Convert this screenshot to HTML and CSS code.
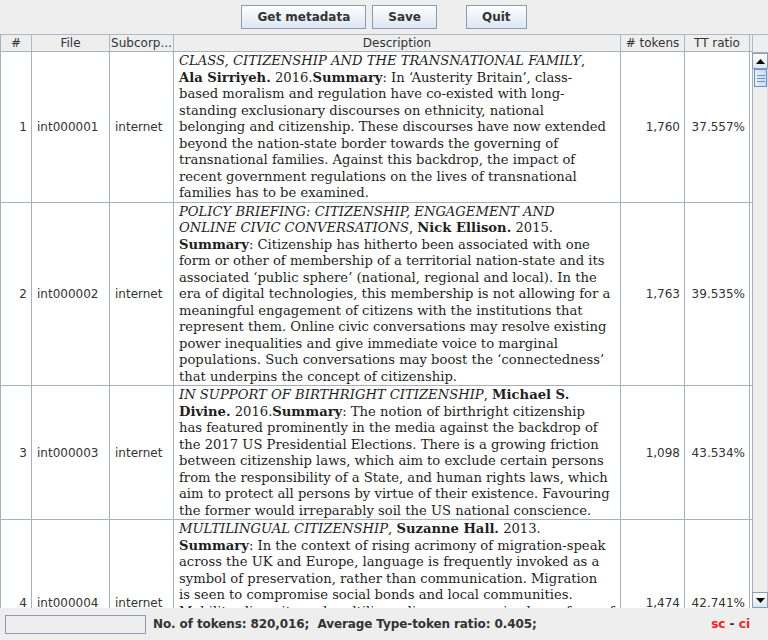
FILE: index.html
```html
<!DOCTYPE html>
<html>
<head>
<meta charset="utf-8">
<link rel="stylesheet" href="styles.css">
</head>
<body>
<div class="app">
  <div class="toolbar">
    <button class="btn">Get metadata</button>
    <button class="btn">Save</button>
    <button class="btn btn-quit">Quit</button>
  </div>
  <div class="main">
    <div class="table">
      <div class="row head">
        <div class="hc">#</div>
        <div class="hc">File</div>
        <div class="hc">Subcorp...</div>
        <div class="hc">Description</div>
        <div class="hc"># tokens</div>
        <div class="hc">TT ratio</div>
      </div>
      <div class="body">
        <div class="row">
          <div class="c r">1</div>
          <div class="c">int000001</div>
          <div class="c">internet</div>
          <div class="c desc">
            <span class="l"><i>CLASS, CITIZENSHIP AND THE TRANSNATIONAL FAMILY</i>,</span>
            <span class="l"><b>Ala Sirriyeh.</b> 2016.<b>Summary</b>: In ‘Austerity Britain’, class-</span>
            <span class="l">based moralism and regulation have co-existed with long-</span>
            <span class="l">standing exclusionary discourses on ethnicity, national</span>
            <span class="l">belonging and citizenship. These discourses have now extended</span>
            <span class="l">beyond the nation-state border towards the governing of</span>
            <span class="l">transnational families. Against this backdrop, the impact of</span>
            <span class="l">recent government regulations on the lives of transnational</span>
            <span class="l">families has to be examined.</span>
          </div>
          <div class="c r">1,760</div>
          <div class="c r">37.557%</div>
        </div>
        <div class="row">
          <div class="c r">2</div>
          <div class="c">int000002</div>
          <div class="c">internet</div>
          <div class="c desc">
            <span class="l"><i>POLICY BRIEFING: CITIZENSHIP, ENGAGEMENT AND</i></span>
            <span class="l"><i>ONLINE CIVIC CONVERSATIONS</i>, <b>Nick Ellison.</b> 2015.</span>
            <span class="l"><b>Summary</b>: Citizenship has hitherto been associated with one</span>
            <span class="l">form or other of membership of a territorial nation-state and its</span>
            <span class="l">associated ‘public sphere’ (national, regional and local). In the</span>
            <span class="l">era of digital technologies, this membership is not allowing for a</span>
            <span class="l">meaningful engagement of citizens with the institutions that</span>
            <span class="l">represent them. Online civic conversations may resolve existing</span>
            <span class="l">power inequalities and give immediate voice to marginal</span>
            <span class="l">populations. Such conversations may boost the ‘connectedness’</span>
            <span class="l">that underpins the concept of citizenship.</span>
          </div>
          <div class="c r">1,763</div>
          <div class="c r">39.535%</div>
        </div>
        <div class="row">
          <div class="c r">3</div>
          <div class="c">int000003</div>
          <div class="c">internet</div>
          <div class="c desc">
            <span class="l"><i>IN SUPPORT OF BIRTHRIGHT CITIZENSHIP</i>, <b>Michael S.</b></span>
            <span class="l"><b>Divine.</b> 2016.<b>Summary</b>: The notion of birthright citizenship</span>
            <span class="l">has featured prominently in the media against the backdrop of</span>
            <span class="l">the 2017 US Presidential Elections. There is a growing friction</span>
            <span class="l">between citizenship laws, which aim to exclude certain persons</span>
            <span class="l">from the responsibility of a State, and human rights laws, which</span>
            <span class="l">aim to protect all persons by virtue of their existence. Favouring</span>
            <span class="l">the former would irreparably soil the US national conscience.</span>
          </div>
          <div class="c r">1,098</div>
          <div class="c r">43.534%</div>
        </div>
        <div class="row">
          <div class="c r">4</div>
          <div class="c">int000004</div>
          <div class="c">internet</div>
          <div class="c desc">
            <span class="l"><i>MULTILINGUAL CITIZENSHIP</i>, <b>Suzanne Hall.</b> 2013.</span>
            <span class="l"><b>Summary</b>: In the context of rising acrimony of migration-speak</span>
            <span class="l">across the UK and Europe, language is frequently invoked as a</span>
            <span class="l">symbol of preservation, rather than communication. Migration</span>
            <span class="l">is seen to compromise social bonds and local communities.</span>
            <span class="l">Mobility, diversity and multilingualism are perceived as a form of</span>
            <span class="l">threat to social cohesion. This article explores how multilingual</span>
            <span class="l">citizens in urban neighbourhoods negotiate belonging through</span>
            <span class="l">everyday language practices in shops, streets and public</span>
            <span class="l">spaces of the city.</span>
          </div>
          <div class="c r">1,474</div>
          <div class="c r">42.741%</div>
        </div>
      </div>
    </div>
    <div class="vscroll">
      <div class="corner"></div>
      <div class="sb-btn">
        <svg width="9" height="5" viewBox="0 0 9 5"><path d="M0 5 L4.5 0 L9 5 Z" fill="#000"/></svg>
      </div>
      <div class="sb-track">
        <div class="thumb">
          <svg width="8" height="7" viewBox="0 0 8 7"><path d="M0 0.5H8M0 3.5H8M0 6.5H8" stroke="#6f8fc7" stroke-width="1"/></svg>
        </div>
      </div>
      <div class="sb-btn">
        <svg width="9" height="5" viewBox="0 0 9 5"><path d="M0 0 L4.5 5 L9 0 Z" fill="#000"/></svg>
      </div>
    </div>
  </div>
  <div class="status">
    <div class="field"></div>
    <div class="stat-text">No. of tokens: 820,016;  Average Type-token ratio: 0.405;</div>
    <div class="badge"><span class="red">sc</span> - <span class="red">ci</span></div>
  </div>
</div>
</body>
</html>
```

FILE: styles.css
```css
* { box-sizing: border-box; }
html, body { margin: 0; padding: 0; }
body {
  background: #eeeeee;
  font-family: "DejaVu Sans", sans-serif;
  font-size: 12px;
  color: #333333;
}
.app {
  width: 768px;
  height: 640px;
  display: flex;
  flex-direction: column;
  overflow: hidden;
}
.toolbar {
  height: 34px;
  display: flex;
  justify-content: center;
  align-items: flex-start;
  padding-top: 5px;
  gap: 6px;
}
.btn {
  height: 24px;
  padding: 0 15px;
  margin: 0;
  font-family: "DejaVu Sans", sans-serif;
  font-weight: bold;
  font-size: 12px;
  color: #333333;
  border: 1px solid #8c9cb0;
  border-radius: 0;
  background: linear-gradient(#fdfeff, #dde7f2);
}
.btn-quit { margin-left: 23px; }
.main {
  height: 574px;
  display: flex;
  border-top: 1px solid #b0b8c2;
}
.table {
  width: 752px;
  border-left: 1px solid #a4b2c0;
  display: flex;
  flex-direction: column;
}
.row {
  display: grid;
  grid-template-columns: 31px 78px 64px 447px 64px 65px;
}
.head {
  height: 17px;
  background: #eeeeee;
  border-bottom: 1px solid #a4b2c0;
}
.hc {
  border-right: 1px solid #b0b8c2;
  text-align: center;
  line-height: 16px;
  white-space: nowrap;
  overflow: hidden;
}
.body {
  flex: 1;
  overflow: hidden;
  background: #ffffff;
}
.body .row {
  border-bottom: 1px solid #a4b2c0;
}
.c {
  border-right: 1px solid #a4b2c0;
  display: flex;
  align-items: center;
  padding: 0 5px;
  white-space: nowrap;
  overflow: hidden;
}
.c.r { justify-content: flex-end; padding: 0 4px 0 2px; }
.c.desc {
  display: block;
  padding: 1px 0 0 5px;
  font-family: "DejaVu Serif", serif;
  font-size: 13.15px;
  line-height: 16.5px;
  color: #1e1e1e;
}
.l { display: block; }
.vscroll {
  width: 16px;
  display: flex;
  flex-direction: column;
  background: #eeeeee;
}
.corner {
  height: 18px;
  border-left: 1px solid #b0b8c2;
  border-bottom: 1px solid #a4b2c0;
}
.sb-btn {
  height: 16px;
  border: 1px solid #8c9cb0;
  background: linear-gradient(#fdfeff, #dde7f2);
  display: flex;
  align-items: center;
  justify-content: center;
}
.sb-track {
  flex: 1;
  border-left: 1px solid #a4b2c0;
  border-right: 1px solid #d8dde3;
}
.thumb {
  height: 18px;
  margin-left: 1px;
  border: 1px solid #6f8fc7;
  background: linear-gradient(90deg, #e6eefa, #c9dbf2);
  display: flex;
  align-items: center;
  justify-content: center;
}
.status {
  flex: 1;
  display: flex;
  align-items: center;
  padding: 0 18px 0 5px;
}
.field {
  width: 141px;
  height: 19px;
  border: 1px solid #8c9cb0;
  background: #eeeeee;
}
.stat-text {
  margin-left: 7px;
  font-weight: bold;
  white-space: pre;
  letter-spacing: -0.1px;
}
.badge {
  margin-left: auto;
  font-weight: bold;
  color: #333333;
}
.red { color: #ff1a1a; }
```
